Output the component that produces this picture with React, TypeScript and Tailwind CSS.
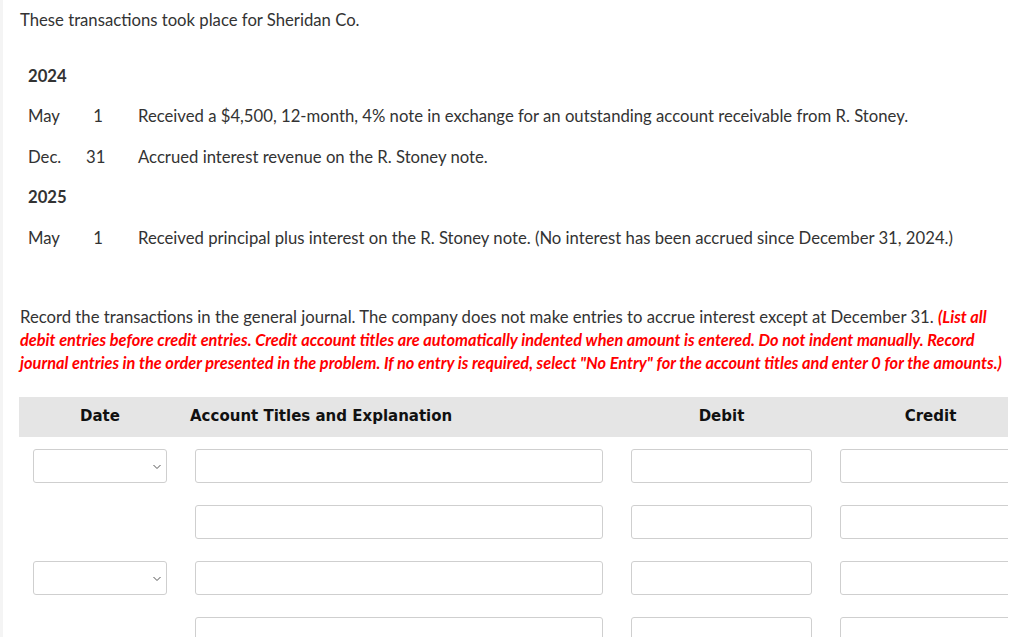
import React from 'react';

const transactions = [
  { year: '2024' },
  { month: 'May', day: '1', text: 'Received a $4,500, 12-month, 4% note in exchange for an outstanding account receivable from R. Stoney.' },
  { month: 'Dec.', day: '31', text: 'Accrued interest revenue on the R. Stoney note.' },
  { year: '2025' },
  { month: 'May', day: '1', text: 'Received principal plus interest on the R. Stoney note. (No interest has been accrued since December 31, 2024.)' },
];

// each row: whether it shows the date select
const journalRows = [true, false, true, false];

function DateSelect() {
  return (
    <div className="relative h-[34px] w-full rounded-[3px] border border-[#cfcfcf] bg-white">
      <svg className="absolute right-[5px] top-[14px]" width="8" height="6" viewBox="0 0 8 6">
        <path d="M0.5 1 L4 4.5 L7.5 1" fill="none" stroke="#555" strokeWidth="1" />
      </svg>
    </div>
  );
}

function TextBox() {
  return <div className="h-[34px] w-full rounded-[3px] border border-[#cfcfcf] bg-white" />;
}

export default function App() {
  return (
    <div className="h-[637px] overflow-hidden border-l-[3px] border-[#f4f4f4] bg-white font-['Lato','Liberation_Sans',sans-serif] text-[16.7px] text-[#333]">
      <div className="pl-[17px] pt-[8px]">
        <p className="leading-6">These transactions took place for Sheridan Co.</p>

        <div className="mt-[24px] pl-[8px]">
          {transactions.map((t, i) =>
            t.year ? (
              <div key={i} className="flex h-[40.5px] items-center font-bold">{t.year}</div>
            ) : (
              <div key={i} className="flex h-[40.5px] items-center">
                <span className="w-[58px]">{t.month}</span>
                <span className="w-[17px] text-right">{t.day}</span>
                <span className="ml-[35px]">{t.text}</span>
              </div>
            )
          )}
        </div>

        <p className="mt-[47px] pr-[12px] leading-[23px]">
          Record the transactions in the general journal. The company does not make entries to accrue interest except at December 31.{' '}
          <span className="text-[16.35px] leading-[20px] font-bold italic text-[#f00]">
            (List all debit entries before credit entries. Credit account titles are automatically indented when amount is entered. Do not indent manually. Record journal entries in the order presented in the problem. If no entry is required, select "No Entry" for the account titles and enter 0 for the amounts.)
          </span>
        </p>

        <div className="mt-[22px] w-[989px] -ml-[1px] overflow-hidden">
          <div className="grid w-[1016px] grid-cols-[162px_436px_209px_209px]">
            <div className="col-span-4 grid h-10 grid-cols-[162px_436px_209px_209px] items-center bg-[#e5e5e5] font-['DejaVu_Sans','Verdana',sans-serif] text-[15px] font-bold text-[#111]">
              <div className="text-center">Date</div>
              <div className="pl-[9px]">Account Titles and Explanation</div>
              <div className="text-center">Debit</div>
              <div className="text-center">Credit</div>
            </div>
            {journalRows.map((hasDate, i) => (
              <React.Fragment key={i}>
                <div className="px-[14px] pt-[12px] pb-[10px]">{hasDate ? <DateSelect /> : null}</div>
                <div className="px-[14px] pt-[12px] pb-[10px]"><TextBox /></div>
                <div className="px-[14px] pt-[12px] pb-[10px]"><TextBox /></div>
                <div className="px-[14px] pt-[12px] pb-[10px]"><TextBox /></div>
              </React.Fragment>
            ))}
          </div>
        </div>
      </div>
    </div>
  );
}
